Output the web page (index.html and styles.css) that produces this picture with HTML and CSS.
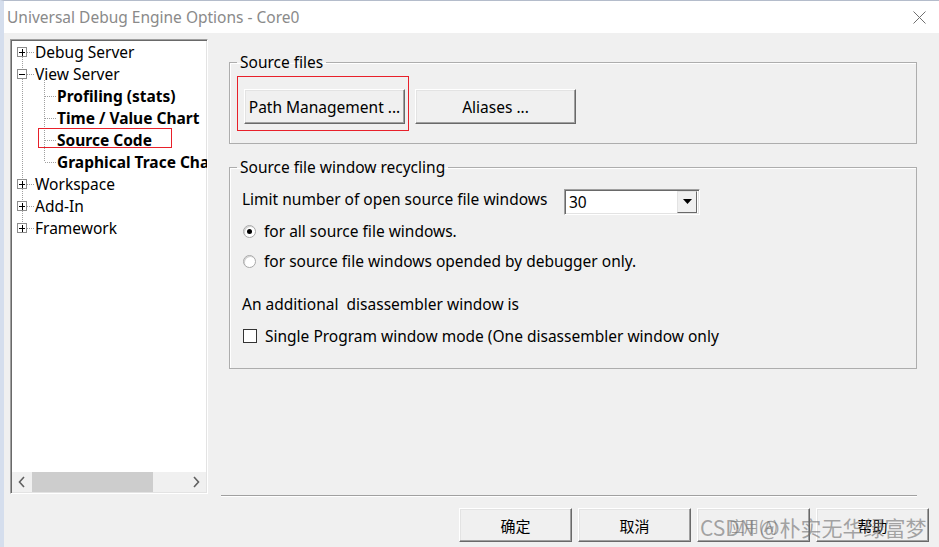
FILE: index.html
```html
<!DOCTYPE html>
<html lang="en">
<head>
    <meta charset="UTF-8">
    <title>Universal Debug Engine Options - Core0</title>
    <link rel="stylesheet" href="styles.css">
</head>
<body>
    <div class="window">
        <div class="titlebar">
            <span class="title">Universal Debug Engine Options - Core0</span>
            <svg class="close-icon" width="13" height="13" viewBox="0 0 13 13">
                <path d="M0.5 0.5 L12.5 12.5 M12.5 0.5 L0.5 12.5" stroke="#6f6f6f" stroke-width="1" fill="none"/>
            </svg>
        </div>

        <div class="main">
            <div class="tree">
                <!-- expander boxes and dotted connector lines, in page coordinates -->
                <svg class="tree-lines" width="196" height="432" viewBox="11 40 196 432">
                    <g stroke="#a0a0a0" stroke-width="1" stroke-dasharray="1 1" fill="none">
                        <path d="M22.5 57 V224"/>
                        <path d="M27 52.5 H34 M27 74.5 H34 M27 184.5 H34 M27 206.5 H34 M27 228.5 H34"/>
                        <path d="M44.5 80 V162"/>
                        <path d="M45 96.5 H56 M45 118.5 H56 M45 140.5 H56 M45 162.5 H56"/>
                    </g>
                    <g fill="#fff" stroke="#8c8c8c">
                        <rect x="17.5" y="47.5" width="9" height="9"/>
                        <rect x="17.5" y="69.5" width="9" height="9"/>
                        <rect x="17.5" y="179.5" width="9" height="9"/>
                        <rect x="17.5" y="201.5" width="9" height="9"/>
                        <rect x="17.5" y="223.5" width="9" height="9"/>
                    </g>
                    <g stroke="#000" stroke-width="1">
                        <path d="M19 52.5 H25 M22.5 49 V56"/>
                        <path d="M19 74.5 H25"/>
                        <path d="M19 184.5 H25 M22.5 181 V188"/>
                        <path d="M19 206.5 H25 M22.5 203 V210"/>
                        <path d="M19 228.5 H25 M22.5 225 V232"/>
                    </g>
                </svg>

                <ul class="tree-items">
                    <li class="tree-node">Debug Server</li>
                    <li class="tree-node">View Server</li>
                    <li class="tree-node child">Profiling (stats)</li>
                    <li class="tree-node child">Time / Value Chart</li>
                    <li class="tree-node child">Source Code</li>
                    <li class="tree-node child">Graphical Trace Chart</li>
                    <li class="tree-node">Workspace</li>
                    <li class="tree-node">Add-In</li>
                    <li class="tree-node">Framework</li>
                </ul>

                <div class="mark mark-source-code"></div>

                <div class="hscroll">
                    <span class="scroll-arrow">
                        <svg width="8" height="12" viewBox="0 0 8 12"><path d="M6 1 L1.5 6 L6 11" stroke="#606060" stroke-width="1.6" fill="none"/></svg>
                    </span>
                    <span class="scroll-thumb"></span>
                    <span class="scroll-track"></span>
                    <span class="scroll-arrow">
                        <svg width="8" height="12" viewBox="0 0 8 12"><path d="M2 1 L6.5 6 L2 11" stroke="#606060" stroke-width="1.6" fill="none"/></svg>
                    </span>
                </div>
            </div>

            <div class="pane">
                <fieldset class="group group-files">
                    <legend>Source files</legend>
                    <div class="files-row">
                        <div class="mark-box">
                            <button class="btn btn-wide">Path Management ...</button>
                        </div>
                        <button class="btn btn-wide btn-aliases">Aliases ...</button>
                    </div>
                </fieldset>

                <fieldset class="group group-recycle">
                    <legend>Source file window recycling</legend>
                    <div class="opt-row">
                        <span class="limit-label">Limit number of open source file windows</span>
                        <div class="combo">
                            <span class="combo-value">30</span>
                            <span class="combo-btn">
                                <svg width="9" height="5" viewBox="0 0 9 5"><path d="M0 0 H9 L4.5 5 Z" fill="#000"/></svg>
                            </span>
                        </div>
                    </div>
                    <div class="opt-row">
                        <span class="radio checked"></span>
                        <span>for all source file windows.</span>
                    </div>
                    <div class="opt-row">
                        <span class="radio"></span>
                        <span>for source file windows opended by debugger only.</span>
                    </div>
                    <div class="opt-row note">An additional&nbsp; disassembler window is</div>
                    <div class="opt-row check-row">
                        <span class="checkbox"></span>
                        <span>Single Program window mode (One disassembler window only</span>
                    </div>
                </fieldset>

                <div class="separator"></div>
            </div>
        </div>

        <div class="footer">
            <button class="btn btn-dialog">确定</button>
            <button class="btn btn-dialog">取消</button>
            <button class="btn btn-dialog" disabled>应用(A)</button>
            <button class="btn btn-dialog">帮助</button>
        </div>

        <div class="watermark">CSDN @朴实无华绿富梦</div>
    </div>
</body>
</html>
```

FILE: styles.css
```css
* {
    margin: 0;
    padding: 0;
    box-sizing: border-box;
}

body {
    width: 939px;
    height: 547px;
    overflow: hidden;
    background: #f0f0f0;
    font-family: 'Noto Sans', 'Noto Sans CJK SC', sans-serif;
    font-size: 15.5px;
    color: #000;
}

.window {
    position: relative;
    height: 547px;
    border-left: 4px solid #d5deed;
    border-top: 1px solid #b4bccb;
    background: #f0f0f0;
}

.titlebar {
    height: 32px;
    background: #fff;
    display: flex;
    align-items: center;
    padding: 0 13px 0 3px;
}

.title {
    flex: 1;
    font-size: 15.5px;
    color: #8a8a8a;
}

.close-icon {
    display: block;
    margin-top: 1px;
}

.main {
    display: flex;
    height: 464px;
}

/* ---- tree view ---- */

.tree {
    position: relative;
    width: 198px;
    height: 455px;
    margin: 6px 0 0 6px;
    background: #fff;
    border: 1px solid;
    border-color: #a0a0a0 #fff #fff #a0a0a0;
    box-shadow: inset 1px 1px #696969, inset -1px -1px #e3e3e3;
    display: flex;
    flex-direction: column;
    overflow: hidden;
}

.tree-lines {
    position: absolute;
    left: 0;
    top: 0;
}

.tree-items {
    list-style: none;
    flex: 1;
    padding-top: 1px;
    position: relative;
}

.tree-node {
    height: 22px;
    line-height: 22px;
    padding-left: 24px;
    white-space: nowrap;
}

.tree-node.child {
    padding-left: 46px;
    font-weight: bold;
}

.mark {
    position: absolute;
    border: 1px solid #e8202a;
}

.mark-source-code {
    left: 27px;
    top: 88px;
    width: 134px;
    height: 20px;
}

.hscroll {
    height: 20px;
    margin: 0 1px 1px 1px;
    background: #f0f0f0;
    display: flex;
}

.scroll-arrow {
    width: 20px;
    display: flex;
    align-items: center;
    justify-content: center;
}

.scroll-thumb {
    width: 121px;
    background: #cdcdcd;
}

.scroll-track {
    flex: 1;
}

/* ---- option pane ---- */

.pane {
    width: 696px;
    margin-left: 13px;
    display: flex;
    flex-direction: column;
}

.group {
    margin-left: 8px;
    border: 1px solid #adadad;
    box-shadow: inset 1px 1px #fff;
}

.group legend {
    padding: 0 3px;
    line-height: 20px;
}

.group-files {
    margin-top: 19px;
    padding: 4px 0 12px 7px;
}

.group-files legend {
    margin-left: 0;
}

.files-row {
    display: flex;
    align-items: flex-start;
}

.mark-box {
    border: 1px solid #e8202a;
    padding: 12px 3px 6px 6px;
}

.btn {
    font-family: inherit;
    font-size: 15.5px;
    color: #000;
    background: #f0f0f0;
    border: 1px solid;
    border-color: #fff #696969 #696969 #fff;
    box-shadow: inset -1px -1px #a0a0a0, inset 1px 1px #e3e3e3;
}

.btn-wide {
    width: 161px;
    height: 35px;
}

.btn-aliases {
    margin: 13px 0 0 6px;
}

.group-recycle {
    margin-top: 13px;
    padding: 9px 0 17px 12px;
}

.group-recycle legend {
    margin-left: -5px;
}

.opt-row {
    height: 30px;
    display: flex;
    align-items: center;
    white-space: nowrap;
}

.limit-label {
    width: 322px;
    margin-top: -4px;
}

.combo {
    width: 136px;
    height: 26px;
    margin-top: 1px;
    background: #fff;
    border: 1px solid;
    border-color: #a0a0a0 #fff #fff #a0a0a0;
    box-shadow: inset 1px 1px #696969, inset -1px -1px #e3e3e3;
    display: flex;
    align-items: center;
    padding: 2px;
}

.combo-value {
    flex: 1;
    padding-left: 2px;
}

.combo-btn {
    width: 20px;
    height: 22px;
    background: #f0f0f0;
    border: 1px solid;
    border-color: #e3e3e3 #696969 #696969 #e3e3e3;
    display: flex;
    align-items: center;
    justify-content: center;
}

.radio {
    width: 13px;
    height: 13px;
    margin: 0 8px 0 1px;
    border-radius: 50%;
    background: #fff;
    border: 1px solid #a8a8a8;
    box-shadow: inset 1px 1px #d0d0d0;
    display: flex;
    align-items: center;
    justify-content: center;
}

.radio.checked::after {
    content: '';
    width: 5px;
    height: 5px;
    border-radius: 50%;
    background: #000;
}

.note {
    margin-top: 13px;
}

.check-row {
    margin-top: 2px;
}

.checkbox {
    width: 14px;
    height: 14px;
    margin: 0 8px 0 1px;
    background: #fff;
    border: 1px solid #333;
}

.separator {
    margin-top: auto;
    height: 2px;
    border-top: 1px solid #a0a0a0;
    border-bottom: 1px solid #fff;
}

/* ---- dialog buttons ---- */

.footer {
    display: flex;
    justify-content: flex-end;
    gap: 6px;
    padding: 11px 10px 0 0;
}

.btn-dialog {
    width: 113px;
    height: 34px;
    font-family: 'Noto Sans CJK SC', sans-serif;
    font-size: 15px;
}

.btn-dialog:disabled {
    color: #a0a0a0;
}

.watermark {
    position: absolute;
    left: 696px;
    top: 511px;
    font-family: 'Noto Sans CJK SC', sans-serif;
    font-size: 21px;
    color: rgba(110, 110, 110, 0.6);
    white-space: nowrap;
    pointer-events: none;
}
```
